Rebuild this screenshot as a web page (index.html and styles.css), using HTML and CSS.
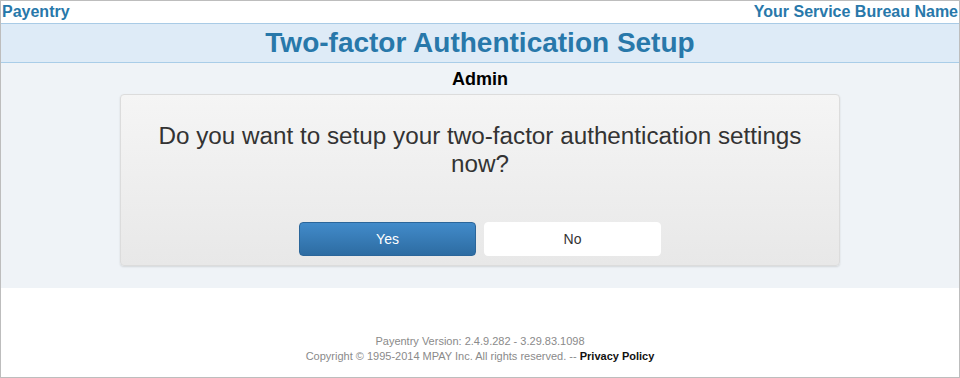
FILE: index.html
```html
<!DOCTYPE html>
<html>
<head>
<meta charset="utf-8">
<title>Two-factor Authentication Setup</title>
<link rel="stylesheet" href="styles.css">
</head>
<body>
<div class="page">
  <header class="topbar">
    <span class="brand">Payentry</span>
    <span class="bureau">Your Service Bureau Name</span>
  </header>
  <div class="titlebar">
    <h1 class="title">Two-factor Authentication Setup</h1>
  </div>
  <main class="content">
    <div class="user">Admin</div>
    <div class="card">
      <p class="question">Do you want to setup your two-factor authentication settings now?</p>
      <div class="actions">
        <button class="btn btn-primary">Yes</button>
        <button class="btn btn-default">No</button>
      </div>
    </div>
  </main>
  <footer class="footer">
    <div>Payentry Version: 2.4.9.282 - 3.29.83.1098</div>
    <div>Copyright © 1995-2014 MPAY Inc. All rights reserved. -- <a class="privacy" href="#">Privacy Policy</a></div>
  </footer>
</div>
</body>
</html>
```
FILE: styles.css
```css
* { box-sizing: border-box; }
html, body { margin: 0; padding: 0; }
body {
  font-family: "Liberation Sans", Arial, sans-serif;
  background: #fff;
}
.page {
  width: 960px;
  height: 378px;
  border: 1px solid #bdbdbd;
  display: flex;
  flex-direction: column;
}
.topbar {
  height: 23px;
  display: flex;
  justify-content: space-between;
  align-items: center;
  padding: 0 1px 1px 1px;
  border-bottom: 1px solid #a9cbe6;
  font-size: 16px;
  font-weight: bold;
  color: #2878aa;
}
.titlebar {
  height: 39px;
  background: #deebf7;
  border-bottom: 1px solid #a9cde8;
  display: flex;
  align-items: center;
  justify-content: center;
}
.title {
  margin: 0;
  font-size: 28px;
  line-height: 38px;
  font-weight: bold;
  color: #2878aa;
}
.content {
  background: #eff3f7;
  height: 225px;
  padding-top: 5px;
  display: flex;
  flex-direction: column;
  align-items: center;
}
.user {
  font-size: 18px;
  line-height: 22px;
  font-weight: bold;
  color: #000;
}
.card {
  margin-top: 4px;
  width: 720px;
  height: 172px;
  border: 1px solid #dcdcdc;
  border-radius: 4px;
  background: linear-gradient(#f5f5f5, #e8e8e8);
  box-shadow: 0 1px 2px rgba(0,0,0,0.12);
  padding: 27px 20px 0;
  display: flex;
  flex-direction: column;
  align-items: center;
}
.question {
  margin: 0;
  font-size: 24.25px;
  line-height: 28px;
  color: #333;
  text-align: center;
}
.actions {
  margin-top: 44px;
  display: flex;
  gap: 8px;
}
.btn {
  width: 177px;
  height: 34px;
  border-radius: 4px;
  font-family: "Liberation Sans", Arial, sans-serif;
  font-size: 14px;
  padding: 0;
  cursor: pointer;
}
.btn-primary {
  background: linear-gradient(#428bca, #2d6ca2);
  border: 1px solid #2b669a;
  color: #fff;
}
.btn-default {
  background: #fff;
  border: 1px solid #fff;
  color: #333;
}
.footer {
  flex: 1;
  background: #fff;
  padding-top: 46px;
  text-align: center;
  font-size: 11px;
  line-height: 15px;
  color: #8a8a8a;
}
.privacy {
  color: #111;
  font-weight: bold;
  text-decoration: none;
}
```
